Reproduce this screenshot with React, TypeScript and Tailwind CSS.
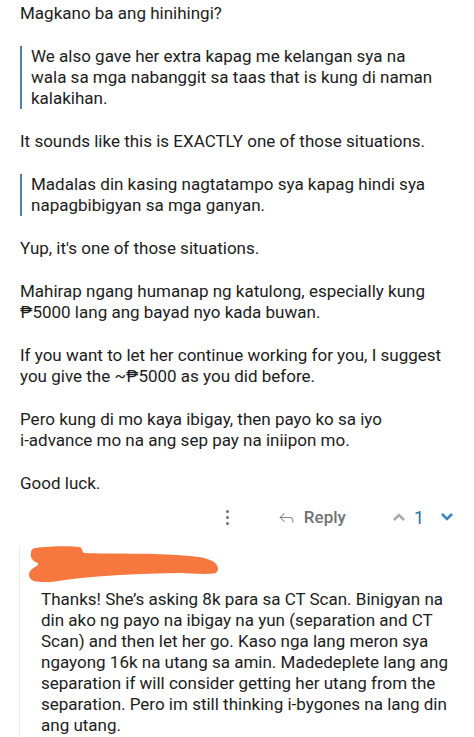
import { Reply } from "lucide-react";

function Quote({ children }: { children: React.ReactNode }) {
  return (
    <div className="ml-[20px] mr-[34px] border-l-[2px] border-[#4f7ea8] pl-[9px]">
      <p>{children}</p>
    </div>
  );
}

export default function App() {
  return (
    <main
      className="w-[474px] h-[737px] overflow-hidden bg-white text-[#1c1c1c] text-[17px] leading-[21px]"
      style={{ fontFamily: "Roboto, 'Noto Sans', sans-serif" }}
    >
      {/* parent comment */}
      <section className="pt-[3px] flex flex-col gap-[22px]">
        <p className="px-[20px]">Magkano ba ang hinihingi?</p>
        <Quote>
          We also gave her extra kapag me kelangan sya na wala sa mga nabanggit sa taas that is kung di naman kalakihan.
        </Quote>
        <p className="px-[20px]">It sounds like this is EXACTLY one of those situations.</p>
        <Quote>Madalas din kasing nagtatampo sya kapag hindi sya napagbibigyan sa mga ganyan.</Quote>
        <p className="px-[20px]">Yup, it's one of those situations.</p>
        <p className="px-[20px]">
          Mahirap ngang humanap ng katulong, especially kung ₱5000 lang ang bayad nyo kada buwan.
        </p>
        <p className="px-[20px]">
          If you want to let her continue working for you, I suggest you give the ~₱5000 as you did before.
        </p>
        <p className="px-[20px]">
          Pero kung di mo kaya ibigay, then payo ko sa iyo
          <br />
          i-advance mo na ang sep pay na iniipon mo.
        </p>
        <p className="px-[20px]">Good luck.</p>
      </section>

      {/* actions */}
      <div className="flex items-center justify-end h-[34px] mt-[6px] pr-[20px]">
        <span className="flex flex-col gap-[3px] mr-[48px]">
          <span className="w-[3px] h-[3px] rounded-full bg-[#6b6e70]" />
          <span className="w-[3px] h-[3px] rounded-full bg-[#6b6e70]" />
          <span className="w-[3px] h-[3px] rounded-full bg-[#6b6e70]" />
        </span>
        <span className="flex items-center gap-[8px] mr-[46px]">
          <Reply size={19} strokeWidth={1.3} className="text-[#86898b]" />
          <span className="text-[17px] font-medium text-[#707375]">Reply</span>
        </span>
        <span className="flex items-center gap-[8px]">
          <svg width="14" height="10" viewBox="0 0 14 10">
            <path d="M2 8 L7 3 L12 8" fill="none" stroke="#a9abad" strokeWidth="2.6" />
          </svg>
          <span className="text-[18px] text-[#2a6fa6]">1</span>
          <svg width="14" height="10" viewBox="0 0 14 10" className="ml-[8px]">
            <path d="M2 2 L7 7 L12 2" fill="none" stroke="#3b87c4" strokeWidth="2.6" />
          </svg>
        </span>
      </div>

      {/* child comment */}
      <section className="mt-[12px] ml-[19px] border-l border-b border-[#ececec] pl-[21px] pr-[14px] pb-[4px]">
        <div className="relative h-[43px]">
          <svg className="absolute left-[-21px] top-[-8px]" width="210" height="50" viewBox="0 0 210 50">
            <path
              d="M15 10 C30 8 50 8 60 9 C63 11 62 14 64 15 C90 16 130 15 157 17 C172 18 183 19 190 22 C198 25 200 31 196 35 C185 37 170 35 160 35 C140 35 120 36 100 37 C80 38 60 40 45 42 C35 44 22 45 14 43 C8 41 8 35 11 32 C14 29 19 28 18 25 C12 23 10 19 11 15 C11 12 12 11 15 10 Z"
              fill="#f6783f"
            />
          </svg>
        </div>
        <p>
          Thanks! She’s asking 8k para sa CT Scan. Binigyan na din ako ng payo na ibigay na yun (separation and CT Scan) and then let her go. Kaso nga lang meron sya ngayong 16k na utang sa amin. Madedeplete lang ang separation if will consider getting her utang from the separation. Pero im still thinking i-bygones na lang din ang utang.
        </p>
      </section>
    </main>
  );
}
